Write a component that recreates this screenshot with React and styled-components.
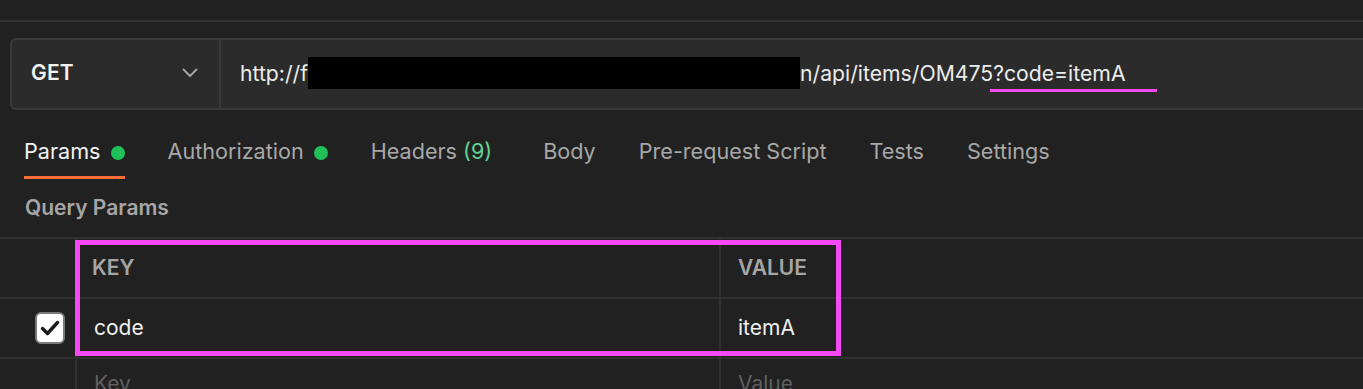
import React from "react";
import styled, { createGlobalStyle } from "styled-components";

const GlobalStyle = createGlobalStyle`
  html, body {
    margin: 0;
    padding: 0;
    background: #212121;
    overflow: hidden;
  }
  body {
    font-family: Inter, "Noto Sans", "Liberation Sans", sans-serif;
    color: #ededed;
  }
`;

const Page = styled.div`
  position: relative;
  width: 1363px;
  height: 389px;
  overflow: hidden;
  background: #212121;
`;

const TopStrip = styled.div`
  height: 20px;
  border-bottom: 2px solid #323232;
  margin-bottom: 16px;
`;

const UrlBar = styled.div`
  display: flex;
  height: 68px;
  margin-left: 10px;
  background: #2b2b2b;
  border: 2px solid #3a3a3a;
  border-right: none;
  border-radius: 6px 0 0 6px;
`;

const Method = styled.div`
  box-sizing: border-box;
  display: flex;
  align-items: center;
  justify-content: space-between;
  width: 209px;
  padding: 0 21px 3px 19px;
  border-right: 2px solid #3a3a3a;
  font-size: 21px;
  font-weight: 600;
  color: #f2f2f2;
  letter-spacing: 0.2px;
`;

const UrlText = styled.div`
  display: flex;
  align-items: center;
  padding: 0 0 3px 19px;
  font-size: 21.2px;
  color: #ececec;
  white-space: nowrap;
`;

const Redacted = styled.span`
  display: inline-block;
  width: 492px;
  height: 32px;
  background: #000;
  margin-top: 1px;
`;

const Marked = styled.span`
  position: relative;
  &::after {
    content: "";
    position: absolute;
    left: -3px;
    right: -31px;
    bottom: -6px;
    height: 3px;
    background: #f748f5;
  }
`;

const TabBar = styled.div`
  display: flex;
  gap: 43px;
  margin-top: 26px;
  padding-left: 24px;
`;

const Tab = styled.div`
  display: flex;
  align-items: center;
  gap: 10px;
  line-height: 30px;
  padding-bottom: 10px;
  font-size: 21.6px;
  color: ${(p) => (p.$active ? "#f2f2f2" : "#a8a8a8")};
  border-bottom: 3px solid ${(p) => (p.$active ? "#ff6c37" : "transparent")};
  margin-right: ${(p) => p.$extra || 0}px;
`;

const Dot = styled.span`
  width: 14px;
  height: 14px;
  border-radius: 50%;
  background: #1fbf5a;
  margin-top: 3px;
`;

const Count = styled.span`
  color: #62d394;
  margin-left: 6px;
`;

const SectionTitle = styled.div`
  margin: 17px 0 17px 25px;
  line-height: 24px;
  font-size: 21px;
  font-weight: 600;
  color: #a6a6a6;
`;

const Table = styled.div`
  border-top: 2px solid #303030;
`;

const Row = styled.div`
  display: grid;
  grid-template-columns: 77px 644px 1fr;
  height: 58px;
  border-bottom: 2px solid #303030;
`;

const Cell = styled.div`
  display: flex;
  align-items: ${(p) => (p.$low ? "flex-start" : "center")};
  padding-left: ${(p) => (p.$pad ? p.$pad : 0)}px;
  justify-content: ${(p) => (p.$end ? "flex-end" : "flex-start")};
  padding-right: ${(p) => (p.$end ? 10 : 0)}px;
  padding-top: ${(p) => (p.$low ? 12 : 0)}px;
  line-height: 26px;
  border-right: ${(p) => (p.$divider ? "2px solid #303030" : "none")};
  font-size: 21px;
  font-weight: ${(p) => (p.$head ? 600 : 400)};
  color: ${(p) => (p.$head ? "#a6a6a6" : p.$placeholder ? "#5f5f5f" : "#f0f0f0")};
`;

const Check = styled.div`
  width: 26px;
  height: 28px;
  border: 2px solid #7a7a7a;
  border-radius: 6px;
  background: #fff;
  display: flex;
  align-items: center;
  justify-content: center;
`;

const Highlight = styled.div`
  position: absolute;
  left: 75px;
  top: 240px;
  width: 756px;
  height: 106px;
  border: 5px solid #f748f5;
  pointer-events: none;
`;

const Chevron = () => (
  <svg width="16" height="10" viewBox="0 0 16 10" fill="none">
    <path d="M1.5 1.5L8 8L14.5 1.5" stroke="#a8a8a8" strokeWidth="1.8" strokeLinecap="round" strokeLinejoin="round" />
  </svg>
);

const Tick = () => (
  <svg width="20" height="18" viewBox="0 0 20 18" fill="none">
    <path d="M2.5 9.5L7.5 14.5L17.5 3.5" stroke="#1a1a1a" strokeWidth="3.4" strokeLinecap="round" strokeLinejoin="round" />
  </svg>
);

const tabs = [
  { name: "Params", active: true, dot: true },
  { name: "Authorization", dot: true },
  { name: "Headers", count: 9, extra: 8 },
  { name: "Body" },
  { name: "Pre-request Script" },
  { name: "Tests" },
  { name: "Settings" },
];

export default function App() {
  return (
    <Page>
      <GlobalStyle />
      <TopStrip />
      <UrlBar>
        <Method>
          GET
          <Chevron />
        </Method>
        <UrlText>
          http://f<Redacted />n/api/items/OM475<Marked>?code=itemA</Marked>
        </UrlText>
      </UrlBar>

      <TabBar>
        {tabs.map((t) => (
          <Tab key={t.name} $active={t.active} $extra={t.extra}>
            <span>
              {t.name}
              {t.count !== undefined && <Count>({t.count})</Count>}
            </span>
            {t.dot && <Dot />}
          </Tab>
        ))}
      </TabBar>

      <SectionTitle>Query Params</SectionTitle>

      <Table>
        <Row>
          <Cell $divider />
          <Cell $head $pad={15} $divider>KEY</Cell>
          <Cell $head $pad={17}>VALUE</Cell>
        </Row>
        <Row>
          <Cell $divider $end>
            <Check>
              <Tick />
            </Check>
          </Cell>
          <Cell $pad={17} $divider>code</Cell>
          <Cell $pad={17}>itemA</Cell>
        </Row>
        <Row>
          <Cell $divider />
          <Cell $pad={17} $divider $placeholder $low>Key</Cell>
          <Cell $pad={17} $placeholder $low>Value</Cell>
        </Row>
      </Table>

      <Highlight />
    </Page>
  );
}
